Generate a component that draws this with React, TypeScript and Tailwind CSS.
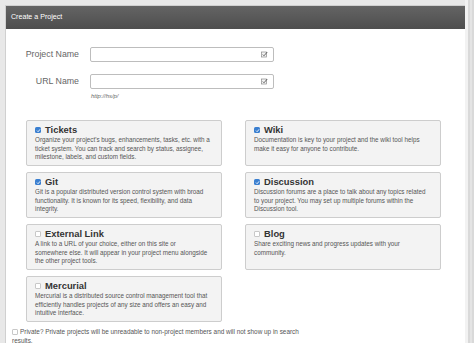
import React from "react";

const font = { fontFamily: '"Liberation Sans", Arial, Helvetica, sans-serif' };

function Check({ on }: { on: boolean }) {
  return on ? (
    <span className="w-[6px] h-[6px] rounded-[1.5px] bg-[#3a7fd0] flex items-center justify-center shrink-0">
      <svg width="5" height="5" viewBox="0 0 10 10">
        <path d="M2 5.2 L4.2 7.4 L8.2 2.6" stroke="white" strokeWidth="1.8" fill="none" />
      </svg>
    </span>
  ) : (
    <span className="w-[6px] h-[6px] rounded-[1px] bg-white border border-[#c8c8c8] shrink-0" />
  );
}

function FieldIcon() {
  return (
    <svg width="7" height="7" viewBox="0 0 14 14" className="shrink-0">
      <rect x="1" y="2" width="10" height="10" fill="#f4f4f4" stroke="#8a8a8a" strokeWidth="1.4" />
      <path d="M3.5 7 L6 9.5 L12.5 2" stroke="#555" strokeWidth="1.8" fill="none" />
    </svg>
  );
}

function Card({ title, desc, on }: { title: string; desc: React.ReactNode; on: boolean }) {
  return (
    <div className="h-[46px] bg-[#f3f3f3] border border-[#cdcdcd] rounded-[2px] pl-[8px] pr-[8.5px] pt-[3px]">
      <div className="flex items-center gap-[4px] h-[12px]">
        <Check on={on} />
        <span className="text-[9.4px] font-bold text-[#333] leading-[12px]">{title}</span>
      </div>
      <div className="text-[6.3px] leading-[8.7px] text-[#555]">{desc}</div>
    </div>
  );
}

export default function App() {
  return (
    <div className="w-[474px] h-[343px] bg-[#e8e8e8] overflow-hidden flex" style={font}>
      <div className="ml-[5px] mt-[5px] w-[460px] h-[400px] bg-white border-l border-t border-[#d0d0d0] flex flex-col shrink-0">
        <div className="h-[23px] bg-gradient-to-b from-[#646464] to-[#4e4e4e] flex items-center px-[5px] text-white text-[7.1px]">
          Create a Project
        </div>
        <div className="flex flex-col">
          <div className="flex items-center mt-[18px] h-[15px]">
            <div className="w-[73px] text-right text-[8.8px] text-[#666]">Project Name</div>
            <div className="ml-[11px] w-[184px] h-[15px] border border-[#bdbdbd] rounded-[2px] flex items-center justify-end pr-[5px]">
              <FieldIcon />
            </div>
          </div>
          <div className="flex items-center mt-[12px] h-[15px]">
            <div className="w-[73px] text-right text-[8.8px] text-[#666]">URL Name</div>
            <div className="ml-[11px] w-[184px] h-[15px] border border-[#bdbdbd] rounded-[2px] flex items-center justify-end pr-[5px]">
              <FieldIcon />
            </div>
          </div>
          <div className="ml-[85px] mt-[3px] text-[5.9px] italic text-[#666] leading-[8px]">http://hs/p/</div>
          <div className="grid grid-cols-[196px_196px] gap-x-[23px] gap-y-[6px] ml-[20px] mt-[20px]">
            <Card
              on
              title="Tickets"
              desc="Organize your project's bugs, enhancements, tasks, etc. with a ticket system. You can track and search by status, assignee, milestone, labels, and custom fields."
            />
            <Card
              on
              title="Wiki"
              desc="Documentation is key to your project and the wiki tool helps make it easy for anyone to contribute."
            />
            <Card
              on
              title="Git"
              desc="Git is a popular distributed version control system with broad functionality. It is known for its speed, flexibility, and data integrity."
            />
            <Card
              on
              title="Discussion"
              desc="Discussion forums are a place to talk about any topics related to your project. You may set up multiple forums within the Discussion tool."
            />
            <Card
              on={false}
              title="External Link"
              desc={
                <>
                  A link to a URL of your choice, either on this site or
                  <br />
                  somewhere else. It will appear in your project menu alongside the other project tools.
                </>
              }
            />
            <Card
              on={false}
              title="Blog"
              desc="Share exciting news and progress updates with your community."
            />
            <Card
              on={false}
              title="Mercurial"
              desc="Mercurial is a distributed source control management tool that efficiently handles projects of any size and offers an easy and intuitive interface."
            />
          </div>
          <div className="ml-[6px] mt-[5px] w-[300px] text-[6.4px] leading-[9px] text-[#555]">
            <span className="inline-block align-[-1px] w-[6px] h-[6px] border border-[#c8c8c8] rounded-[1px] bg-white mr-[2px]" />
            Private? Private projects will be unreadable to non-project members and will not show up in search results.
          </div>
        </div>
      </div>
      <div className="w-[3px] h-full bg-[#f2f2f2] shrink-0" />
      <div className="flex-1 h-full bg-[#d9d9d9] flex justify-center">
        <div className="w-[2px] h-full bg-[#e4e4e4]" />
      </div>
    </div>
  );
}
